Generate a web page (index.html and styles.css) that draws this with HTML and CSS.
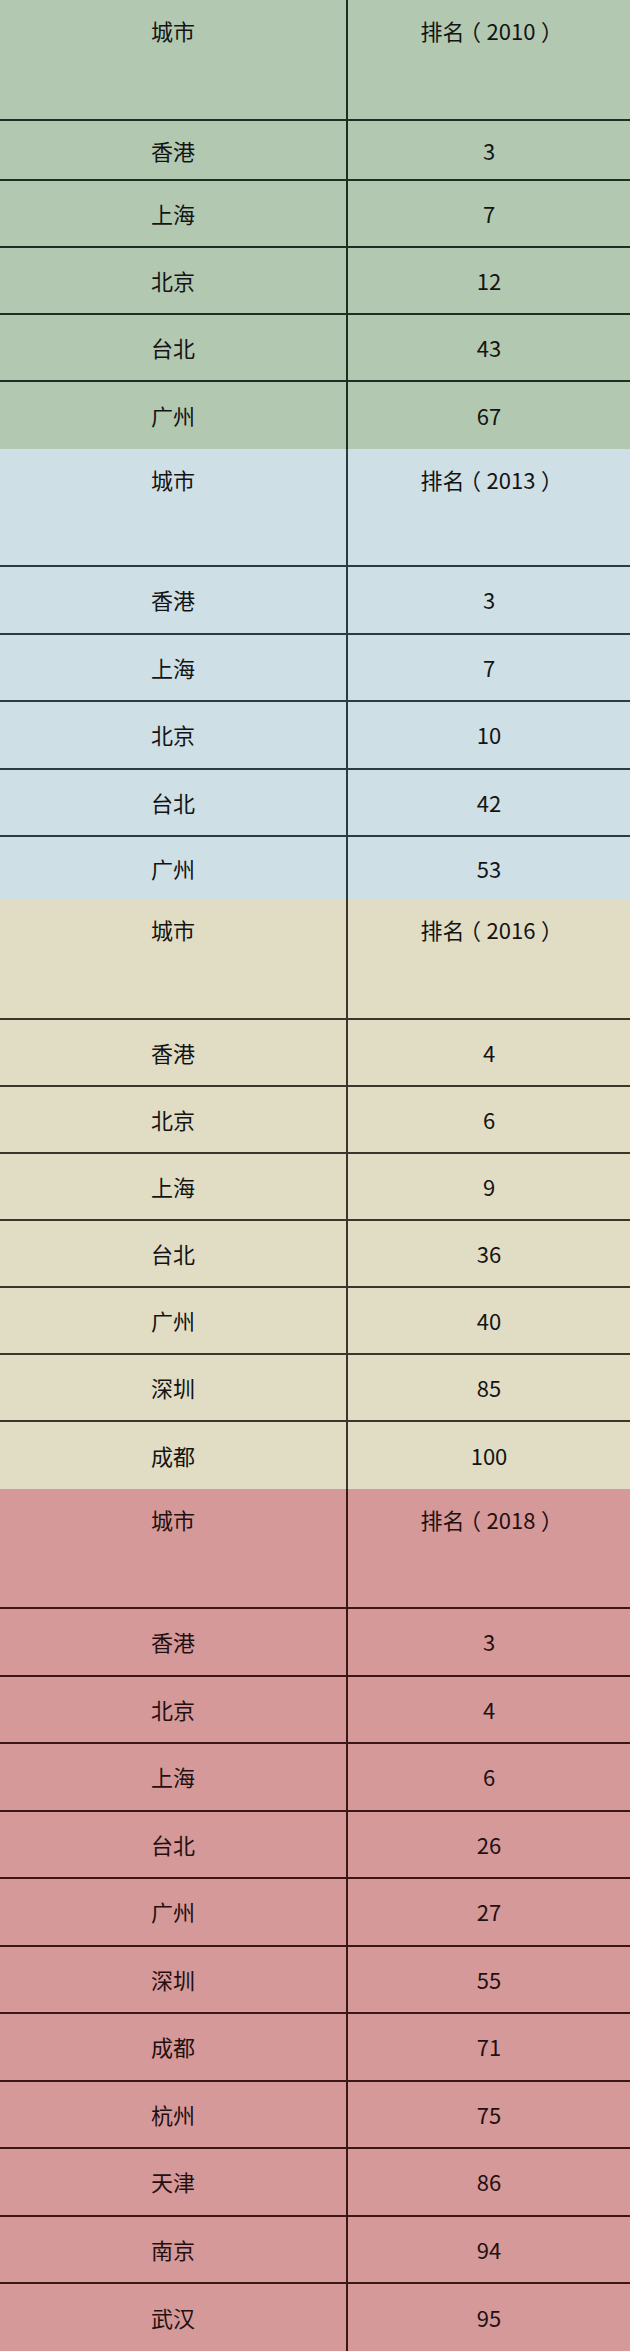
FILE: index.html
```html
<!DOCTYPE html>
<html lang="zh-CN">
<head>
<meta charset="utf-8">
<title>城市排名</title>
<link rel="stylesheet" href="styles.css">
</head>
<body>
<div class="page">
  <section class="block green r67">
    <div class="row head h121"><div class="cell city">城市</div><div class="cell rank">排名<span class="po">（</span>2010<span class="pc">）</span></div></div>
    <div class="row short"><div class="cell city">香港</div><div class="cell rank">3</div></div>
    <div class="row"><div class="cell city">上海</div><div class="cell rank">7</div></div>
    <div class="row"><div class="cell city">北京</div><div class="cell rank">12</div></div>
    <div class="row"><div class="cell city">台北</div><div class="cell rank">43</div></div>
    <div class="row last"><div class="cell city">广州</div><div class="cell rank">67</div></div>
  </section>
  <section class="block blue r675">
    <div class="row head h118"><div class="cell city">城市</div><div class="cell rank">排名<span class="po">（</span>2013<span class="pc">）</span></div></div>
    <div class="row"><div class="cell city">香港</div><div class="cell rank">3</div></div>
    <div class="row"><div class="cell city">上海</div><div class="cell rank">7</div></div>
    <div class="row"><div class="cell city">北京</div><div class="cell rank">10</div></div>
    <div class="row"><div class="cell city">台北</div><div class="cell rank">42</div></div>
    <div class="row last shortlast"><div class="cell city">广州</div><div class="cell rank">53</div></div>
  </section>
  <section class="block beige r67">
    <div class="row head h121"><div class="cell city">城市</div><div class="cell rank">排名<span class="po">（</span>2016<span class="pc">）</span></div></div>
    <div class="row"><div class="cell city">香港</div><div class="cell rank">4</div></div>
    <div class="row"><div class="cell city">北京</div><div class="cell rank">6</div></div>
    <div class="row"><div class="cell city">上海</div><div class="cell rank">9</div></div>
    <div class="row"><div class="cell city">台北</div><div class="cell rank">36</div></div>
    <div class="row"><div class="cell city">广州</div><div class="cell rank">40</div></div>
    <div class="row"><div class="cell city">深圳</div><div class="cell rank">85</div></div>
    <div class="row last"><div class="cell city">成都</div><div class="cell rank">100</div></div>
  </section>
  <section class="block pink r675">
    <div class="row head h120"><div class="cell city">城市</div><div class="cell rank">排名<span class="po">（</span>2018<span class="pc">）</span></div></div>
    <div class="row"><div class="cell city">香港</div><div class="cell rank">3</div></div>
    <div class="row"><div class="cell city">北京</div><div class="cell rank">4</div></div>
    <div class="row"><div class="cell city">上海</div><div class="cell rank">6</div></div>
    <div class="row"><div class="cell city">台北</div><div class="cell rank">26</div></div>
    <div class="row"><div class="cell city">广州</div><div class="cell rank">27</div></div>
    <div class="row"><div class="cell city">深圳</div><div class="cell rank">55</div></div>
    <div class="row"><div class="cell city">成都</div><div class="cell rank">71</div></div>
    <div class="row"><div class="cell city">杭州</div><div class="cell rank">75</div></div>
    <div class="row"><div class="cell city">天津</div><div class="cell rank">86</div></div>
    <div class="row"><div class="cell city">南京</div><div class="cell rank">94</div></div>
    <div class="row last"><div class="cell city">武汉</div><div class="cell rank">95</div></div>
  </section>
</div>
</body>
</html>
```

FILE: styles.css
```css
html, body {
  margin: 0;
  padding: 0;
}
body {
  width: 630px;
  font-family: "Noto Sans CJK SC", "Noto Sans", sans-serif;
  font-size: 22px;
  color: #141414;
}
.page {
  display: flex;
  flex-direction: column;
}
.block {
  display: flex;
  flex-direction: column;
}
.green { background: #b2c8b0; --line: #1f2e22; }
.blue { background: #cfdfe6; --line: #2c3a42; }
.beige { background: #e1ddc5; --line: #3b352b; }
.pink { background: #d5999a; --line: #3a1616; color: #241010; }

.row {
  display: grid;
  grid-template-columns: 348px 1fr;
  box-sizing: border-box;
  border-bottom: 2px solid var(--line);
}
.r67 .row { height: 67px; }
.r675 .row { height: 67.5px; }
.block .row.short { height: 60px; }
.block .row.shortlast { height: 62px; }
.row.last { border-bottom: none; }
.block .row.h118 { height: 118px; }
.block .row.h120 { height: 120px; }
.block .row.h121 { height: 121px; }

.cell {
  display: flex;
  align-items: center;
  justify-content: center;
  line-height: 1.3;
  white-space: nowrap;
}
.city {
  border-right: 2px solid var(--line);
}
.head .cell {
  align-items: flex-start;
  padding-top: 16px;
}
.po, .pc {
  font-feature-settings: "halt" 1;
  padding: 0 0.25em;
}
```
